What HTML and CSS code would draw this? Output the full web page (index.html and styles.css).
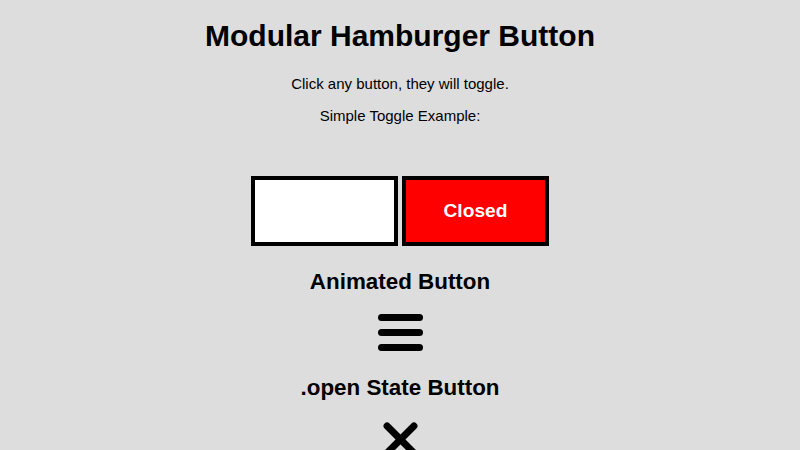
FILE: index.html
```html
<!DOCTYPE html>
<html>
<head>
<meta charset="utf-8">
<link rel="stylesheet" href="styles.css">
</head>
<body>
<main class="page">
  <h1 class="title">Modular Hamburger Button</h1>
  <p class="text text-first">Click any button, they will toggle.</p>
  <p class="text text-second">Simple Toggle Example:</p>
  <div class="toggles">
    <button class="toggle toggle-open" type="button"></button>
    <button class="toggle toggle-closed" type="button">Closed</button>
  </div>
  <h2 class="subtitle subtitle-first">Animated Button</h2>
  <button class="burger" type="button" aria-label="menu">
    <span class="bar"></span><span class="bar"></span><span class="bar"></span>
  </button>
  <h2 class="subtitle subtitle-second">.open State Button</h2>
  <button class="burger open" type="button" aria-label="close">
    <span class="bar"></span><span class="bar"></span><span class="bar"></span>
  </button>
</main>
</body>
</html>
```
FILE: styles.css
```css
html, body {
  margin: 0;
  padding: 0;
  background: #dddddd;
  height: 100%;
  overflow: hidden;
}
body {
  font-family: "Liberation Sans", Arial, sans-serif;
  color: #000;
}
.page {
  display: flex;
  flex-direction: column;
  align-items: center;
  padding-top: 18px;
}
.title {
  margin: 0;
  font-size: 30px;
  line-height: 36px;
  font-weight: bold;
}
.text {
  margin: 0;
  font-size: 15px;
  line-height: 20px;
}
.text-first { margin-top: 20px; }
.text-second { margin-top: 12px; }
.toggles {
  display: flex;
  gap: 4px;
  margin-top: 50px;
}
.toggle {
  box-sizing: border-box;
  width: 147px;
  height: 70px;
  border: 4px solid #000;
  margin: 0;
  padding: 0;
  font-family: "Liberation Sans", Arial, sans-serif;
  font-size: 19.2px;
  font-weight: bold;
  color: #fff;
  background: #fff;
}
.toggle-closed { background: #ff0000; }
.subtitle {
  margin: 0;
  font-size: 22.4px;
  line-height: 26px;
  font-weight: bold;
}
.subtitle-first { margin-top: 23px; }
.subtitle-second { margin-top: 24px; }
.burger {
  position: relative;
  display: flex;
  flex-direction: column;
  gap: 8px;
  width: 45px;
  height: 37px;
  margin: 19px 0 0;
  padding: 0;
  border: 0;
  background: transparent;
}
.burger.open { margin-top: 20px; }
.bar {
  display: block;
  width: 45px;
  height: 7px;
  border-radius: 4px;
  background: #000;
}
.open .bar:nth-child(1) { transform: translateY(15px) rotate(45deg); }
.open .bar:nth-child(2) { opacity: 0; }
.open .bar:nth-child(3) { transform: translateY(-15px) rotate(-45deg); }
```
